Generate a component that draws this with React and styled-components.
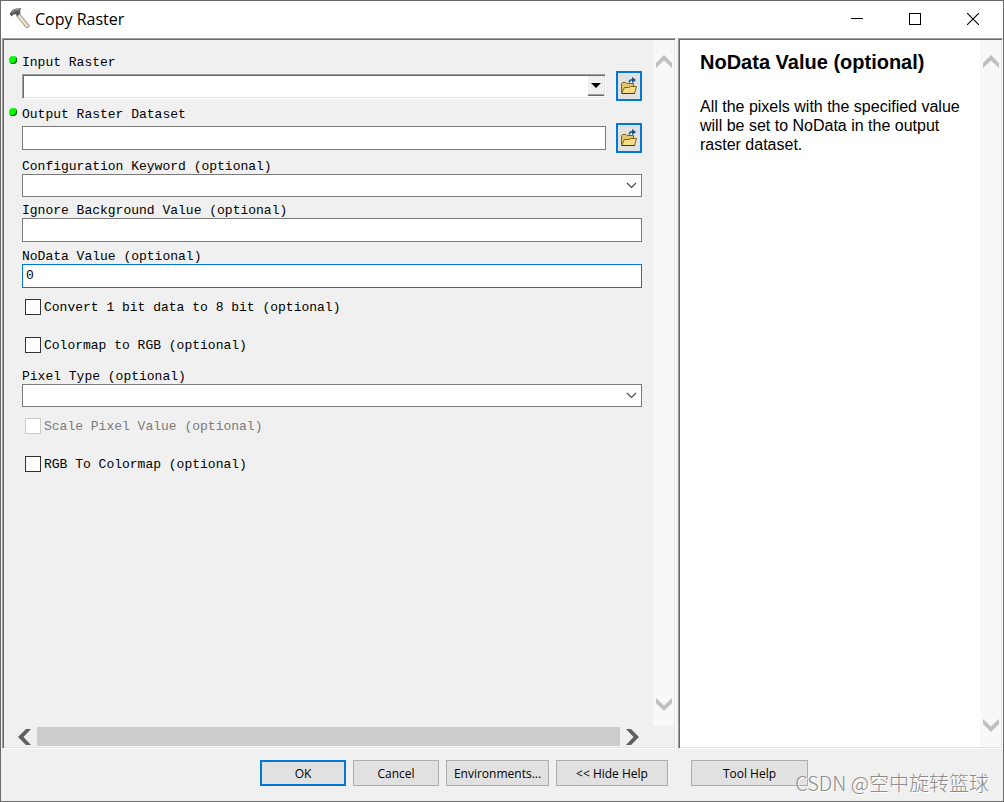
import React, { useState } from "react";
import styled, { createGlobalStyle, css } from "styled-components";

const face = "#f0f0f0";
const uiFont = '"Open Sans", "Noto Sans", sans-serif';
const formFont = '"Liberation Mono", monospace';
const helpFont = '"Liberation Sans", Arial, sans-serif';

const GlobalStyle = createGlobalStyle`
  *, *::before, *::after { box-sizing: border-box; }
  body { margin: 0; background: ${face}; }
  button, input, select { font: inherit; color: inherit; margin: 0; }
`;

const Window = styled.div`
  position: relative;
  display: flex;
  flex-direction: column;
  min-height: 100vh;
  border: 1px solid #6b6b6b;
  background: ${face};
  color: #000;
  font-family: ${uiFont};
  overflow: hidden;
`;

const TitleBar = styled.header`
  display: flex;
  align-items: center;
  height: 37px;
  padding: 0 1px 2px 8px;
  background: #fff;
`;

const Title = styled.h1`
  flex: 1;
  margin: 0 0 0 4px;
  font-size: 16px;
  line-height: 24px;
  font-weight: 400;
`;

const CaptionButton = styled.button`
  display: grid;
  place-items: center;
  width: 58px;
  height: 35px;
  padding: 0;
  border: 0;
  background: transparent;
`;

const Panes = styled.main`
  flex: 1;
  display: grid;
  grid-template-columns: minmax(0, 1fr) 325px;
  gap: 2px;
  padding: 0 0 0 1px;
`;

const sunken = css`
  border: 1px solid;
  border-color: #a0a0a0 #fff #fff #a0a0a0;
  box-shadow: inset 1px 1px #696969, inset -1px -1px #e3e3e3;
  padding: 1px;
`;

const FormPane = styled.section`
  ${sunken}
  display: grid;
  grid-template-columns: minmax(0, 1fr) 21px;
  grid-template-rows: 1fr 21px;
`;

const HelpPane = styled.aside`
  ${sunken}
  display: grid;
  grid-template-columns: minmax(0, 1fr) 21px;
  background: #fff;
`;

const ScrollColumn = styled.div`
  display: flex;
  flex-direction: column;
  justify-content: space-between;
  align-items: center;
  padding: 15px 0;
  background: #f8f8f8;
`;

const ScrollRow = styled.div`
  display: flex;
  align-items: center;
  gap: 6px;
  padding: 1px 14px;
`;

const ScrollButton = styled.button`
  display: block;
  padding: 0;
  border: 0;
  background: transparent;
  line-height: 0;
  color: ${(p) => (p.$dark ? "#606060" : "#bfbfbf")};
`;

const ScrollThumb = styled.div`
  flex: 1;
  height: 19px;
  background: #cdcdcd;
`;

const Form = styled.form`
  padding: 14px 11px 24px 5px;
  font-family: ${formFont};
  font-size: 13px;
  line-height: 18px;
`;

const Field = styled.div`
  display: grid;
  grid-template-columns: 13px minmax(0, 1fr);
  margin-bottom: ${(p) => (p.$loose ? 6 : 5)}px;
`;

const StatusDot = styled.span`
  width: 8px;
  height: 8px;
  margin-top: 2px;
  border-radius: 50%;
  background: #0f0;
  box-shadow: inset -1px -1px #0a5a0a;
`;

const FieldLabel = styled.label`
  grid-column: 2;
  height: 16px;
`;

const Control = styled.div`
  grid-column: 2;
  display: flex;
  align-items: center;
  gap: 10px;
  padding-top: ${(p) => (p.$browse ? 1 : 0)}px;
`;

const TextBox = styled.input`
  flex: 1;
  min-width: 0;
  height: 24px;
  padding: 0 3px 2px;
  border: 1px solid ${(p) => (p.$active ? "#0078d7" : "#7a7a7a")};
  border-radius: 0;
  background: #fff;
  outline: none;
`;

const SelectBox = styled.div`
  display: grid;
  flex: 1;
  align-items: center;
  height: ${(p) => (p.$classic ? 25 : 23)}px;
  background: #fff;
  border: 1px solid #7a7a7a;
  ${(p) =>
    p.$classic &&
    css`
      border-color: #a0a0a0 #fff #fff #a0a0a0;
      box-shadow: inset 1px 1px #696969, inset -1px -1px #e3e3e3;
    `}
  > * {
    grid-area: 1 / 1;
  }
  > svg {
    justify-self: end;
    margin-right: 4px;
    pointer-events: none;
  }
`;

const Select = styled.select`
  appearance: none;
  width: 100%;
  height: 100%;
  padding: 0 20px 0 4px;
  border: 0;
  background: transparent;
  outline: none;
`;

const DropCap = styled.span`
  justify-self: end;
  display: grid;
  place-items: center;
  width: 16px;
  height: 20px;
  margin-right: 1px;
  background: ${face};
  border-bottom: 1px solid #696969;
  box-shadow: inset 0 -1px #a0a0a0;
  pointer-events: none;
`;

const BrowseButton = styled.button`
  display: grid;
  place-items: center;
  width: 26px;
  height: 30px;
  padding: 0;
  border: 2px solid #0078d7;
  background: #e1e1e1;
`;

const CheckList = styled.div`
  display: flex;
  flex-direction: column;
  gap: 22px;
  padding: 6px 0 15px 16px;
`;

const CheckLabel = styled.label`
  display: flex;
  align-items: center;
  gap: 3px;
  height: 16px;
  color: ${(p) => (p.$disabled ? "#7a7a7a" : "#000")};
`;

const CheckBox = styled.input`
  appearance: none;
  width: 16px;
  height: 16px;
  border: 1px solid #333;
  background: #fff;
  &:checked {
    box-shadow: inset 0 0 0 3px #fff;
    background: #333;
  }
  &:disabled {
    border-color: #ccc;
  }
`;

const CheckText = styled.span`
  padding-top: 2px;
`;

const HelpText = styled.div`
  padding: 10px 16px 16px 20px;
  font-family: ${helpFont};
`;

const HelpTitle = styled.h2`
  margin: 0 0 23px;
  font-size: 20px;
  line-height: 24px;
  font-weight: 700;
`;

const HelpBody = styled.p`
  margin: 0;
  font-size: 16px;
  line-height: 19px;
`;

const Footer = styled.footer`
  display: flex;
  gap: 7px;
  padding: 11px 16px 15px 259px;
`;

const PushButton = styled.button`
  width: ${(p) => p.$width}px;
  height: 26px;
  margin-left: ${(p) => (p.$apart ? 16 : 0)}px;
  padding: 0;
  border: ${(p) => (p.$primary ? "2px solid #0078d7" : "1px solid #adadad")};
  background: #e1e1e1;
  font-size: 12px;
  white-space: nowrap;
`;

const Watermark = styled.span`
  position: absolute;
  right: 14px;
  bottom: 4px;
  font-family: "Noto Sans CJK SC", sans-serif;
  font-size: 20px;
  line-height: 28px;
  font-weight: 300;
  color: #8c8c8c;
  text-shadow: 1px 1px #fff;
  white-space: nowrap;
  pointer-events: none;
`;

const HammerIcon = () => (
  <svg width="22" height="22" viewBox="0 0 22 22" aria-hidden="true">
    <path d="M7.5 8 L10.5 5.5 L20.5 17.5 L20 19 L18 20 L17 19.5 Z" fill="#cdbfa8" stroke="#8f8371" strokeWidth="0.6" />
    <path d="M9.5 7.5 L18.5 18.5" stroke="#f4ecdf" strokeWidth="1.4" />
    <path d="M0.5 6 L3.5 2 L7 0.5 L12.5 0.3 L11 2.5 L11.5 5.2 L8.2 8.2 L6.2 6 L4.5 6.5 L2.6 8.6 Z" fill="#565b5b" />
    <path d="M3 4.5 L5.5 2.4 L10 1.4" stroke="#a9adad" strokeWidth="1" fill="none" />
  </svg>
);

const FolderIcon = () => (
  <svg width="18" height="18" viewBox="0 0 18 18" aria-hidden="true">
    <path d="M1.5 16 V6.5 L2.5 5.5 H6 L7 6.5 H13.5 V9.5" fill="#e2c469" stroke="#80641d" />
    <path d="M1.5 16.5 L4.5 10.5 H9 L10.5 9.5 H16.5 L14.5 16.5 Z" fill="#f5dc86" stroke="#80641d" />
    <path d="M2 16.5 H15" stroke="#4d3b10" />
    <path d="M9.5 5.5 V4 L10.5 3 H13" fill="none" stroke="#15518c" strokeWidth="1.5" />
    <path d="M12 0 L16 3 L12 6 Z" fill="#15518c" />
  </svg>
);

const ChevronIcon = () => (
  <svg width="11" height="7" viewBox="0 0 11 7" aria-hidden="true">
    <path d="M1 1 L5.5 5.5 L10 1" fill="none" stroke="#444" strokeWidth="1.1" />
  </svg>
);

const arrowShapes = {
  up: "M0 13 V8 L8 0 L16 8 V13 L8 5.5 Z",
  down: "M0 0 V5 L8 13 L16 5 V0 L8 7.5 Z",
  left: "M13 0 H8 L0 8 L8 16 H13 L5.5 8 Z",
  right: "M0 0 H5 L13 8 L5 16 H0 L7.5 8 Z",
};

function Arrow({ to }) {
  const vertical = to === "up" || to === "down";
  const w = vertical ? 16 : 13;
  const h = vertical ? 13 : 16;
  return (
    <ScrollButton type="button" $dark={!vertical} aria-label={`Scroll ${to}`}>
      <svg width={w} height={h} viewBox={`0 0 ${w} ${h}`}>
        <path d={arrowShapes[to]} fill="currentColor" />
      </svg>
    </ScrollButton>
  );
}

function BrowseField({ id, label, children }) {
  return (
    <Field>
      <StatusDot />
      <FieldLabel htmlFor={id}>{label}</FieldLabel>
      <Control $browse>
        {children}
        <BrowseButton type="button" aria-label={`Browse for ${label}`}>
          <FolderIcon />
        </BrowseButton>
      </Control>
    </Field>
  );
}

function SelectField({ id, label }) {
  return (
    <Field>
      <FieldLabel htmlFor={id}>{label}</FieldLabel>
      <Control>
        <SelectBox>
          <Select id={id}>
            <option value="" />
          </Select>
          <ChevronIcon />
        </SelectBox>
      </Control>
    </Field>
  );
}

function Check({ id, label, disabled }) {
  return (
    <CheckLabel htmlFor={id} $disabled={disabled}>
      <CheckBox id={id} type="checkbox" disabled={disabled} />
      <CheckText>{label}</CheckText>
    </CheckLabel>
  );
}

export default function App() {
  const [noData, setNoData] = useState("0");
  return (
    <>
      <GlobalStyle />
      <Window>
        <TitleBar>
          <HammerIcon />
          <Title>Copy Raster</Title>
          <CaptionButton aria-label="Minimize">
            <svg width="12" height="12">
              <path d="M0 5.5 H12" stroke="#000" />
            </svg>
          </CaptionButton>
          <CaptionButton aria-label="Maximize">
            <svg width="12" height="12">
              <rect x="0.5" y="0.5" width="11" height="11" fill="none" stroke="#000" />
            </svg>
          </CaptionButton>
          <CaptionButton aria-label="Close">
            <svg width="12" height="12">
              <path d="M0 0 L12 12 M12 0 L0 12" stroke="#000" strokeWidth="1.1" />
            </svg>
          </CaptionButton>
        </TitleBar>

        <Panes>
          <FormPane>
            <Form>
              <BrowseField id="input-raster" label="Input Raster">
                <SelectBox $classic>
                  <Select id="input-raster">
                    <option value="" />
                  </Select>
                  <DropCap>
                    <svg width="10" height="5">
                      <path d="M0 0 H10 L5 5 Z" />
                    </svg>
                  </DropCap>
                </SelectBox>
              </BrowseField>
              <BrowseField id="output-raster" label="Output Raster Dataset">
                <TextBox id="output-raster" type="text" />
              </BrowseField>
              <SelectField id="keyword" label="Configuration Keyword (optional)" />
              <Field $loose>
                <FieldLabel htmlFor="background">Ignore Background Value (optional)</FieldLabel>
                <Control>
                  <TextBox id="background" type="text" />
                </Control>
              </Field>
              <Field>
                <FieldLabel htmlFor="nodata">NoData Value (optional)</FieldLabel>
                <Control>
                  <TextBox
                    id="nodata"
                    type="text"
                    $active
                    value={noData}
                    onChange={(e) => setNoData(e.target.value)}
                  />
                </Control>
              </Field>
              <CheckList>
                <Check id="convert" label="Convert 1 bit data to 8 bit (optional)" />
                <Check id="to-rgb" label="Colormap to RGB (optional)" />
              </CheckList>
              <SelectField id="pixel-type" label="Pixel Type (optional)" />
              <CheckList>
                <Check id="scale" label="Scale Pixel Value (optional)" disabled />
                <Check id="to-colormap" label="RGB To Colormap (optional)" />
              </CheckList>
            </Form>
            <ScrollColumn>
              <Arrow to="up" />
              <Arrow to="down" />
            </ScrollColumn>
            <ScrollRow>
              <Arrow to="left" />
              <ScrollThumb />
              <Arrow to="right" />
            </ScrollRow>
          </FormPane>

          <HelpPane>
            <HelpText>
              <HelpTitle>NoData Value (optional)</HelpTitle>
              <HelpBody>
                All the pixels with the specified value will be set to NoData in the output raster
                dataset.
              </HelpBody>
            </HelpText>
            <ScrollColumn>
              <Arrow to="up" />
              <Arrow to="down" />
            </ScrollColumn>
          </HelpPane>
        </Panes>

        <Footer>
          <PushButton $primary $width={86}>OK</PushButton>
          <PushButton $width={86}>Cancel</PushButton>
          <PushButton $width={103}>Environments...</PushButton>
          <PushButton $width={112}>&lt;&lt; Hide Help</PushButton>
          <PushButton $width={117} $apart>Tool Help</PushButton>
        </Footer>
        <Watermark>CSDN @空中旋转篮球</Watermark>
      </Window>
    </>
  );
}
